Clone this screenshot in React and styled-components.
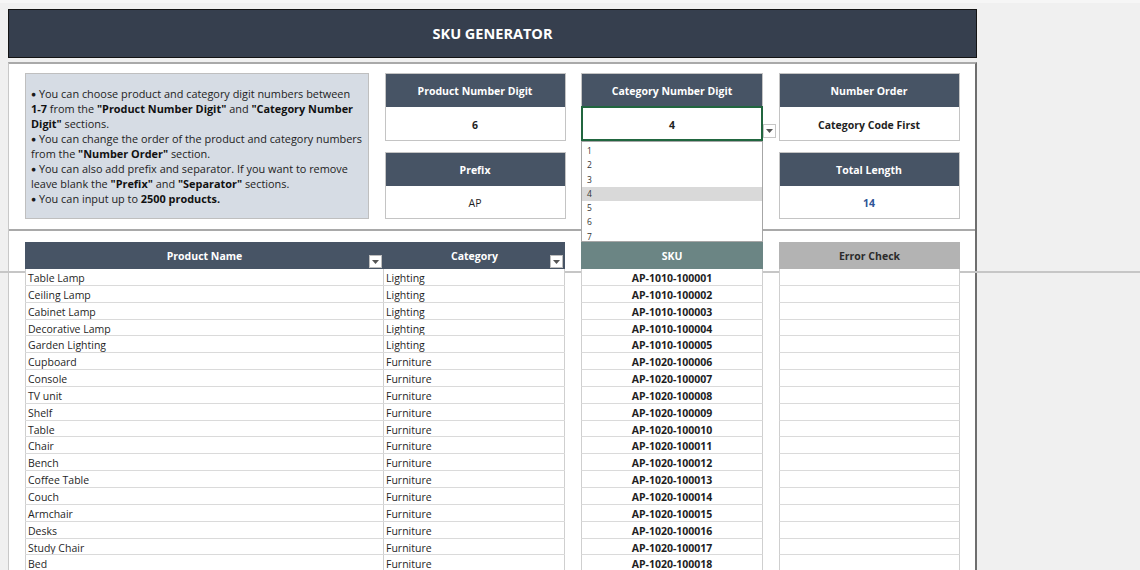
import React from "react";
import styled, { createGlobalStyle } from "styled-components";

const GlobalStyle = createGlobalStyle`
  html, body {
    margin: 0;
    padding: 0;
    background: #f0f0f0;
  }
  body {
    font-family: "Open Sans", "Liberation Sans", sans-serif;
    color: #1f1f1f;
  }
`;

const products = [
  ["Table Lamp", "Lighting", "AP-1010-100001"],
  ["Ceiling Lamp", "Lighting", "AP-1010-100002"],
  ["Cabinet Lamp", "Lighting", "AP-1010-100003"],
  ["Decorative Lamp", "Lighting", "AP-1010-100004"],
  ["Garden Lighting", "Lighting", "AP-1010-100005"],
  ["Cupboard", "Furniture", "AP-1020-100006"],
  ["Console", "Furniture", "AP-1020-100007"],
  ["TV unit", "Furniture", "AP-1020-100008"],
  ["Shelf", "Furniture", "AP-1020-100009"],
  ["Table", "Furniture", "AP-1020-100010"],
  ["Chair", "Furniture", "AP-1020-100011"],
  ["Bench", "Furniture", "AP-1020-100012"],
  ["Coffee Table", "Furniture", "AP-1020-100013"],
  ["Couch", "Furniture", "AP-1020-100014"],
  ["Armchair", "Furniture", "AP-1020-100015"],
  ["Desks", "Furniture", "AP-1020-100016"],
  ["Study Chair", "Furniture", "AP-1020-100017"],
  ["Bed", "Furniture", "AP-1020-100018"],
];

const digits = [1, 2, 3, 4, 5, 6, 7];

const ArrowIcon = () => (
  <svg width="7" height="4" viewBox="0 0 7 4">
    <path d="M0 0 L7 0 L3.5 4 Z" fill="#555" />
  </svg>
);

const App = () => {
  return (
    <>
      <GlobalStyle />
      <Page>
        <FreezeLine />
        <TitleBar>SKU GENERATOR</TitleBar>
        <Panel>
          <Settings>
            <InfoBox>
              <p>
                <Bullet>●</Bullet> You can choose product and category digit
                numbers between <b>1-7</b> from the{" "}
                <b>"Product Number Digit"</b> and{" "}
                <b>"Category Number Digit"</b> sections.
              </p>
              <p>
                <Bullet>●</Bullet> You can change the order of the product and
                category numbers from the <b>"Number Order"</b> section.
              </p>
              <p>
                <Bullet>●</Bullet> You can also add prefix and separator. If you
                want to remove leave blank the <b>"Prefix"</b> and{" "}
                <b>"Separator"</b> sections.
              </p>
              <p>
                <Bullet>●</Bullet> You can input up to <b>2500 products.</b>
              </p>
            </InfoBox>

            <Card>
              <CardHead>Product Number Digit</CardHead>
              <CardValue $bold>6</CardValue>
            </Card>

            <Card>
              <CardHead>Category Number Digit</CardHead>
              <CardValue $bold $selected>
                4
                <DropButton>
                  <ArrowIcon />
                </DropButton>
                <DropList>
                  {digits.map((d) => (
                    <DropItem key={d} $active={d === 4}>
                      {d}
                    </DropItem>
                  ))}
                </DropList>
              </CardValue>
            </Card>

            <Card>
              <CardHead>Number Order</CardHead>
              <CardValue $bold>Category Code First</CardValue>
            </Card>

            <Card>
              <CardHead>Prefix</CardHead>
              <CardValue>AP</CardValue>
            </Card>

            <Card>
              <CardHead>Separator</CardHead>
              <CardValue $bold>-</CardValue>
            </Card>

            <Card>
              <CardHead>Total Length</CardHead>
              <CardValue $bold $blue>
                14
              </CardValue>
            </Card>
          </Settings>

          <Divider />

          <TableArea>
            <ProductTable>
              <HeadRow>
                <HeadCell>
                  Product Name
                  <FilterButton>
                    <ArrowIcon />
                  </FilterButton>
                </HeadCell>
                <HeadCell>
                  Category
                  <FilterButton>
                    <ArrowIcon />
                  </FilterButton>
                </HeadCell>
              </HeadRow>
              {products.map(([name, cat]) => (
                <Row key={name}>
                  <Cell>{name}</Cell>
                  <Cell>{cat}</Cell>
                </Row>
              ))}
            </ProductTable>

            <Column>
              <ColumnHead $bg="#6b8584" $color="#fff">
                SKU
              </ColumnHead>
              {products.map(([name, , sku]) => (
                <ColumnCell key={name} $center>
                  {sku}
                </ColumnCell>
              ))}
            </Column>

            <Column>
              <ColumnHead $bg="#b3b3b3" $color="#2b2b2b">
                Error Check
              </ColumnHead>
              {products.map(([name]) => (
                <ColumnCell key={name} />
              ))}
            </Column>
          </TableArea>
        </Panel>
      </Page>
    </>
  );
};

const Page = styled.div`
  position: relative;
  width: 1140px;
  height: 570px;
  overflow: hidden;
  padding: 9px 0 0 8px;
  box-sizing: border-box;
  border-top: 3px solid #f6f6f6;
`;

// excel frozen pane line, runs across the whole sheet
const FreezeLine = styled.div`
  position: absolute;
  left: 0;
  right: 0;
  top: 268px;
  height: 2px;
  background: #c6c6c6;
  z-index: 1;
`;

const TitleBar = styled.div`
  width: 969px;
  height: 49px;
  box-sizing: border-box;
  margin-top: -3px;
  padding-bottom: 1px;
  background: #363f4e;
  border: 1px solid #141414;
  display: flex;
  align-items: center;
  justify-content: center;
  color: #fff;
  font-weight: 700;
  font-size: 14.5px;
`;

const Panel = styled.div`
  width: 969px;
  height: 520px;
  margin-top: 4px;
  box-sizing: border-box;
  background: #fff;
  border-top: 2px solid #a9a9a9;
  border-left: 1px solid #c8c8c8;
  border-right: 2px solid #6e6e6e;
`;

const Settings = styled.div`
  display: grid;
  grid-template-columns: 344px 181px 182px 181px;
  grid-template-rows: 68px 67px;
  column-gap: 15.5px;
  row-gap: 11px;
  padding: 9px 0 10px 16px;
`;

const InfoBox = styled.div`
  grid-row: 1 / span 2;
  background: #d6dce4;
  border: 1px solid #bfbfbf;
  padding: 12px 6px 0 5px;
  font-size: 10.9px;
  line-height: 15px;
  color: #222;

  p {
    margin: 0;
  }
  b {
    font-weight: 700;
    color: #111;
  }
`;

const Bullet = styled.span`
  position: relative;
  top: -1px;
  font-size: 8.5px;
  line-height: 1;
  color: #1a1a1a;
`;

const Card = styled.div`
  display: flex;
  flex-direction: column;
  border: 1px solid #c4c4c4;
  background: #fff;
`;

const CardHead = styled.div`
  height: 33px;
  flex-shrink: 0;
  background: #475465;
  color: #fff;
  font-weight: 700;
  font-size: 10.5px;
  display: flex;
  align-items: center;
  justify-content: center;
`;

const CardValue = styled.div`
  position: relative;
  flex: 1;
  display: flex;
  align-items: center;
  justify-content: center;
  padding-top: 2px;
  font-size: 10.5px;
  font-weight: ${(p) => (p.$bold ? 700 : 400)};
  color: ${(p) => (p.$blue ? "#2f5597" : "#1f1f1f")};
  box-sizing: border-box;
  border: ${(p) => (p.$selected ? "2px solid #21663f" : "none")};
  margin: ${(p) => (p.$selected ? "-1px" : "0")};
`;

const DropButton = styled.div`
  position: absolute;
  left: calc(100% + 2px);
  top: 16px;
  width: 13px;
  height: 14px;
  box-sizing: border-box;
  background: #fff;
  border: 1px solid #c6c6c6;
  display: flex;
  align-items: center;
  justify-content: center;
  z-index: 3;
`;

const DropList = styled.div`
  position: absolute;
  left: -2px;
  top: calc(100% + 2px);
  width: calc(100% + 4px);
  height: 101px;
  box-sizing: border-box;
  background: #fff;
  border: 1px solid #a6a6a6;
  padding-top: 2px;
  z-index: 4;
`;

const DropItem = styled.div`
  height: 14.3px;
  line-height: 14.3px;
  padding-left: 5px;
  font-size: 8.5px;
  font-weight: 400;
  text-align: left;
  color: #333;
  background: ${(p) => (p.$active ? "#d9d9d9" : "transparent")};
`;

const Divider = styled.div`
  height: 2px;
  background: #a9a9a9;
`;

const TableArea = styled.div`
  position: relative;
  z-index: 2;
  display: flex;
  gap: 16px;
  padding: 11px 0 0 16px;
`;

const ProductTable = styled.div`
  width: 540px;
  background: #fff;
`;

const HeadRow = styled.div`
  display: grid;
  grid-template-columns: 359px 181px;
  height: 27px;
  background: #475465;
`;

const HeadCell = styled.div`
  position: relative;
  display: flex;
  align-items: center;
  justify-content: center;
  color: #fff;
  font-weight: 700;
  font-size: 10.5px;
`;

const FilterButton = styled.div`
  position: absolute;
  right: 2px;
  bottom: 1px;
  width: 13px;
  height: 13px;
  box-sizing: border-box;
  background: #fff;
  border: 1px solid #bdbdbd;
  display: flex;
  align-items: center;
  justify-content: center;
`;

const Row = styled.div`
  display: grid;
  grid-template-columns: 359px 181px;
  height: 16.85px;
  box-sizing: border-box;
  border-bottom: 1px solid #dadada;
`;

const Cell = styled.div`
  padding: 3px 0 0 2px;
  font-size: 10.5px;
  line-height: 13px;
  color: #1f1f1f;
  border-right: 1px solid #cfcfcf;
  white-space: nowrap;
  overflow: hidden;

  &:first-child {
    border-left: 1px solid #cfcfcf;
  }
`;

const Column = styled.div`
  width: 182px;
  background: #fff;

  &:last-child {
    width: 181px;
  }
`;

const ColumnHead = styled.div`
  height: 27px;
  display: flex;
  align-items: center;
  justify-content: center;
  background: ${(p) => p.$bg};
  color: ${(p) => p.$color};
  font-weight: 700;
  font-size: 10.5px;
`;

const ColumnCell = styled.div`
  height: 16.85px;
  box-sizing: border-box;
  padding-top: 3px;
  border: 1px solid #cfcfcf;
  border-top: none;
  border-bottom-color: #dadada;
  text-align: ${(p) => (p.$center ? "center" : "left")};
  font-size: 10.5px;
  font-weight: 700;
  line-height: 13px;
  color: #1f1f1f;
  overflow: hidden;
`;

export default App;
